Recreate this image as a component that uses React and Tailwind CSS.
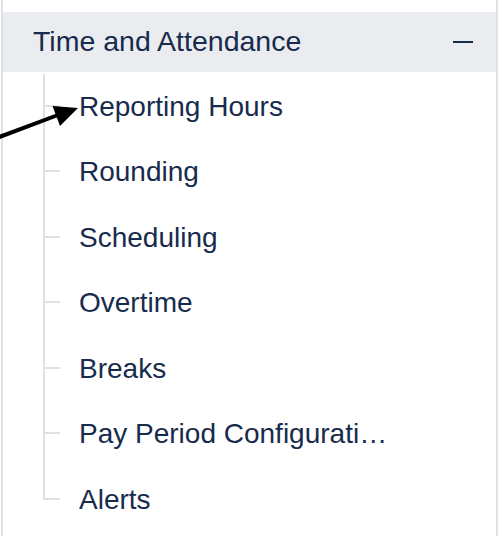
import { useState } from 'react';

const items = [
  'Reporting Hours',
  'Rounding',
  'Scheduling',
  'Overtime',
  'Breaks',
  'Pay Period Configuration',
  'Alerts',
];

function TreeRow({ label, last }) {
  return (
    <li className="flex h-[65.5px] items-stretch">
      {/* connector */}
      <div className="flex w-[17px] flex-col">
        <div className="h-1/2 border-b-2 border-l-2 border-[#dfe1e6]" />
        <div className={last ? 'flex-1' : 'flex-1 border-l-2 border-[#dfe1e6]'} />
      </div>
      <div className="ml-[19px] flex items-center">
        <span className="block w-[309px] truncate leading-[1.3] text-[28px] text-[#172b4d]">
          {label}
        </span>
      </div>
    </li>
  );
}

export default function App() {
  const [open, setOpen] = useState(true);

  return (
    <div className="relative h-[536px] w-[502px] overflow-hidden bg-white font-['Liberation_Sans',Arial,sans-serif]">
      <div className="ml-[1px] flex h-full w-[497px] flex-col border-x-2 border-[#dfe1e6] pt-[12px]">
        {/* Header */}
        <button
          onClick={() => setOpen(!open)}
          className="flex h-[60px] w-full items-center justify-between bg-[#ebecf0] pl-[30px] pr-[23px]"
        >
          <span className="leading-[1.3] text-[28.5px] text-[#172b4d]">Time and Attendance</span>
          <span className="block h-[2.5px] w-[20px] bg-[#172b4d]" />
        </button>

        {/* Items */}
        {open && (
          <ul className="pl-[40px] pt-[2px]">
            {items.map((label, i) => (
              <TreeRow key={label} label={label} last={i === items.length - 1} />
            ))}
          </ul>
        )}
      </div>

      {/* Annotation arrow */}
      <svg
        className="pointer-events-none absolute left-0 top-0"
        width="90"
        height="145"
        viewBox="0 0 90 145"
      >
        <line x1="-2" y1="137.5" x2="58" y2="115" stroke="#000" strokeWidth="4" />
        <polygon points="78,108 52.5,106 60,126" fill="#000" />
      </svg>
    </div>
  );
}
